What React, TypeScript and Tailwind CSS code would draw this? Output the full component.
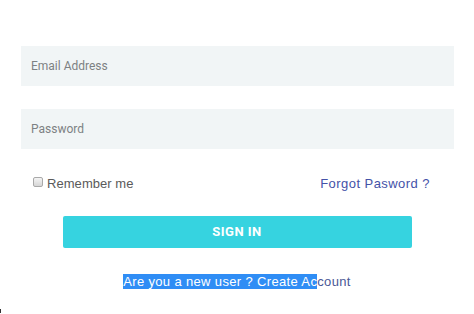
import { useState } from 'react';

export default function App() {
    const [remember, setRemember] = useState(false);

    return (
        <div className="w-[474px] h-[314px] bg-white relative overflow-hidden" style={{ fontFamily: '"Liberation Sans", Arial, sans-serif' }}>
            <div className="flex flex-col px-[21px] pt-[46px]">
                {/* Inputs */}
                <input
                    type="email"
                    placeholder="Email Address"
                    className="h-[40px] w-[433px] bg-[#f1f5f6] px-[10px] text-[12px] text-[#555] placeholder:text-[#7d8183] outline-none"
                    style={{ fontFamily: 'Roboto, "Liberation Sans", sans-serif' }}
                />
                <input
                    type="password"
                    placeholder="Password"
                    className="mt-[23px] h-[40px] w-[433px] bg-[#f1f5f6] px-[10px] text-[12px] text-[#555] placeholder:text-[#7d8183] outline-none"
                    style={{ fontFamily: 'Roboto, "Liberation Sans", sans-serif' }}
                />

                {/* Remember / forgot */}
                <div className="mt-[25px] flex items-center justify-between pl-[12px] pr-[23px]">
                    <label className="flex items-center gap-[4px] text-[13px] tracking-[0.05px] text-[#5a5a5a]">
                        <input
                            type="checkbox"
                            checked={remember}
                            onChange={(e) => setRemember(e.target.checked)}
                            className="appearance-none w-[10px] h-[10px] m-0 -mt-[3px] rounded-[2px] border border-[#a9a9a9] bg-gradient-to-b from-[#f4f4f4] to-[#d6d6d6] checked:bg-[#8a8a8a]"
                        />
                        Remember me
                    </label>
                    <a href="#" className="text-[13px] tracking-[0.45px] text-[#4452a8]">
                        Forgot Pasword ?
                    </a>
                </div>

                {/* Button */}
                <button className="mt-[22px] self-center w-[349px] h-[32px] bg-[#36d3e0] text-white text-[13px] font-bold tracking-[0.5px] rounded-[2px]" style={{ fontFamily: 'Roboto, "Liberation Sans", sans-serif' }}>
                    SIGN IN
                </button>

                {/* Create account */}
                <p className="mt-[27px] self-center text-[13px] tracking-[0.35px] leading-[14px] text-[#4a5796]">
                    <span className="bg-[#2f8df5] text-white">Are you a new user ? Create Ac</span>count
                </p>
            </div>
            <div className="absolute left-0 top-[309px] w-[1px] h-[4px] bg-[#333]" />
        </div>
    );
}
